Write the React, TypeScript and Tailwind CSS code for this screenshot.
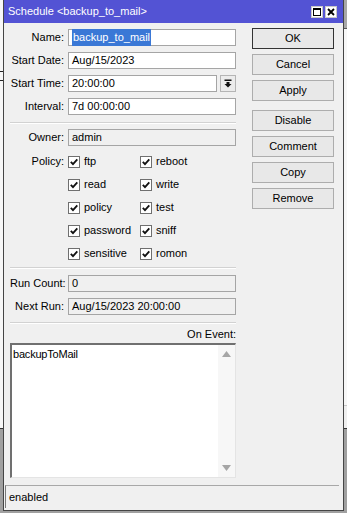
import type { ReactNode } from 'react';

const POLICIES: [string, string][] = [
  ['ftp', 'reboot'],
  ['read', 'write'],
  ['policy', 'test'],
  ['password', 'sniff'],
  ['sensitive', 'romon'],
];

const BUTTONS = ['OK', 'Cancel', 'Apply', 'Disable', 'Comment', 'Copy', 'Remove'];

function Check({ label }: { label: string }) {
  return (
    <div className="flex items-center gap-[4px]">
      <svg width="12" height="12" viewBox="0 0 12 12" className="shrink-0">
        <rect x="0.5" y="0.5" width="11" height="11" fill="#fff" stroke="#6f6f6f" />
        <path d="M2.8 5.8 L5 8.2 L9.3 3.4" fill="none" stroke="#111" strokeWidth="1.8" />
      </svg>
      <span>{label}</span>
    </div>
  );
}

function Row({ label, children }: { label: string; children: ReactNode }) {
  return (
    <div className="flex h-[17px] items-center gap-[4px]">
      <span className="w-[54px] shrink-0 whitespace-nowrap text-right">{label}</span>
      {children}
    </div>
  );
}

function Box({ children, readOnly }: { children?: ReactNode; readOnly?: boolean }) {
  return (
    <div
      className={`flex h-[17px] flex-1 items-center border border-[#a5a5a5] px-[3px] ${
        readOnly ? 'bg-[#f0f0f0]' : 'bg-white'
      }`}
    >
      {children}
    </div>
  );
}

function Separator() {
  return <div className="h-[2px] border-t border-b border-t-[#d2d2d2] border-b-white" />;
}

export default function App() {
  return (
    <div className="flex h-[513px] w-[347px] flex-col bg-[#a0a0a0] font-['Liberation_Sans',Arial,sans-serif] text-[11px] text-black">
      <div className="flex h-[511px]">
        {/* background peeking out on the left */}
        <div className="flex w-[3px] flex-col">
          <div className="h-[71px] bg-[#f7f7f7]" />
          <div className="h-[1px] bg-[#222]" />
          <div className="h-[8px] bg-[#f7f7f7]" />
          <div className="h-[1px] bg-[#222]" />
          <div className="h-[347px] bg-[#f7f7f7]" />
          <div className="h-[1px] bg-[#333]" />
          <div className="flex-1 bg-[#a0a0a0]" />
        </div>

        {/* window */}
        <div className="flex w-[341px] flex-col border-x border-b border-[#454545]">
          <div className="flex h-[23px] items-center bg-[#5353d4] pl-[4px] pr-[6px] text-white">
            <span className="flex-1">Schedule &lt;backup_to_mail&gt;</span>
            <div className="flex gap-[2px]">
              <div className="flex h-[12px] w-[12px] items-center justify-center border border-[#c8c8c8] bg-white">
                <div className="h-[8px] w-[8px] border border-t-2 border-black" />
              </div>
              <div className="flex h-[12px] w-[12px] items-center justify-center border border-[#c8c8c8] bg-white">
                <svg width="8" height="8" viewBox="0 0 8 8">
                  <path d="M1 1 L7 7 M7 1 L1 7" stroke="#000" strokeWidth="1.8" />
                </svg>
              </div>
            </div>
          </div>

          <div className="flex flex-1 flex-col bg-[#f0f0f0] pb-[2px]">
            <div className="flex pl-[6px]">
              <div className="flex w-[226px] flex-col">
                <div className="mt-[6px] flex flex-col gap-[6px]">
                  <Row label="Name:">
                    <Box>
                      <span className="bg-[#3a78d6] px-[1px] text-white">backup_to_mail</span>
                    </Box>
                  </Row>
                  <Row label="Start Date:">
                    <Box>Aug/15/2023</Box>
                  </Row>
                  <Row label="Start Time:">
                    <Box>20:00:00</Box>
                    <div className="ml-[-1px] flex h-[17px] w-[16px] items-center justify-center border border-[#b5b5b5] bg-[#ececec]">
                      <svg width="8" height="9" viewBox="0 0 8 9">
                        <rect x="0.5" y="0.5" width="7" height="1.5" fill="#111" />
                        <rect x="2.5" y="3" width="3" height="2" fill="#111" />
                        <path d="M0.5 5 L7.5 5 L4 8.5 Z" fill="#111" />
                      </svg>
                    </div>
                  </Row>
                  <Row label="Interval:">
                    <Box>7d 00:00:00</Box>
                  </Row>
                </div>

                <div className="mt-[7px]">
                  <Separator />
                </div>

                <div className="mt-[5px]">
                  <Row label="Owner:">
                    <Box readOnly>admin</Box>
                  </Row>
                </div>

                <div className="mt-[7px] flex flex-col gap-[6px]">
                  {POLICIES.map(([a, b], i) => (
                    <div key={a} className="flex h-[17px] items-center gap-[4px]">
                      <span className="w-[54px] shrink-0 text-right">{i === 0 ? 'Policy:' : ''}</span>
                      <div className="w-[68px] shrink-0">
                        <Check label={a} />
                      </div>
                      <Check label={b} />
                    </div>
                  ))}
                </div>

                <div className="mt-[5px]">
                  <Separator />
                </div>

                <div className="mt-[6px] flex flex-col gap-[6px]">
                  <Row label="Run Count:">
                    <Box readOnly>0</Box>
                  </Row>
                  <Row label="Next Run:">
                    <Box readOnly>Aug/15/2023 20:00:00</Box>
                  </Row>
                </div>

                <div className="mt-[7px]">
                  <Separator />
                </div>

                <div className="mt-[3px] h-[14px] text-right leading-[14px]">On Event:</div>

                <div className="mt-[2px] flex h-[135px] border-t-2 border-l-2 border-r border-b border-t-[#707070] border-l-[#707070] border-r-[#e4e4e4] border-b-[#e4e4e4] bg-white">
                  <div className="flex-1 pl-[1px] pt-[1px] tracking-[-0.2px]">backupToMail</div>
                  <div className="flex w-[17px] flex-col items-center justify-between bg-[#f7f7f7] py-[6px]">
                    <svg width="9" height="6" viewBox="0 0 9 6">
                      <path d="M0 6 L4.5 0 L9 6 Z" fill="#a6a6a6" />
                    </svg>
                    <svg width="9" height="6" viewBox="0 0 9 6">
                      <path d="M0 0 L9 0 L4.5 6 Z" fill="#a6a6a6" />
                    </svg>
                  </div>
                </div>
              </div>

              <div className="ml-[16px] mt-[5px] flex w-[82px] flex-col">
                {BUTTONS.map((b, i) => (
                  <div
                    key={b}
                    className={`flex h-[21px] items-center justify-center border bg-[#e8e8e8] ${
                      i === 0 ? 'border-[#333]' : 'border-[#adadad]'
                    } ${i === 0 ? '' : i === 3 ? 'mt-[9px]' : 'mt-[5px]'}`}
                  >
                    {b}
                  </div>
                ))}
              </div>
            </div>

            <div className="ml-[1px] mt-auto flex h-[23px] w-[334px] items-center border-t border-l border-t-[#a8a8a8] border-l-[#7a7a7a] pl-[3px]">
              enabled
            </div>
          </div>
        </div>

        {/* background peeking out on the right */}
        <div className="flex w-[3px] flex-col">
          <div className="h-[28px] bg-[#a8a8a8]" />
          <div className="h-[1px] bg-[#555]" />
          <div className="h-[376px] bg-[#f7f7f7]" />
          <div className="h-[1px] bg-[#c8c8c8]" />
          <div className="h-[22px] bg-[#efefef]" />
          <div className="h-[1px] bg-[#333]" />
          <div className="flex-1 bg-[#a0a0a0]" />
        </div>
      </div>
    </div>
  );
}
